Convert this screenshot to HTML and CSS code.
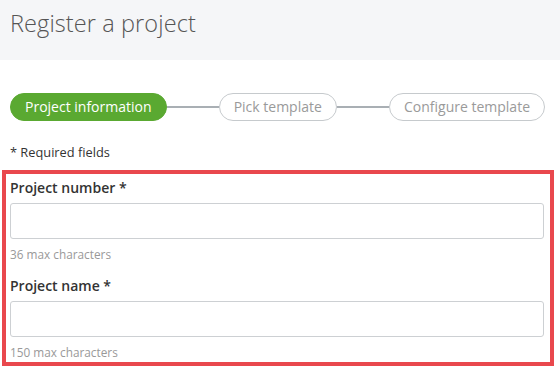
FILE: index.html
```html
<!DOCTYPE html>
<html>
<head>
<meta charset="utf-8">
<link rel="stylesheet" href="styles.css">
</head>
<body>
<header class="header">
  <h1 class="title">Register a project</h1>
</header>
<main class="content">
  <div class="stepper">
    <div class="step step-active">Project information</div>
    <div class="step-line"></div>
    <div class="step">Pick template</div>
    <div class="step-line"></div>
    <div class="step">Configure template</div>
  </div>
  <p class="required">* Required fields</p>
  <section class="form-box">
    <div class="field">
      <label class="label">Project number *</label>
      <input class="input" type="text">
      <div class="hint">36 max characters</div>
    </div>
    <div class="field field-second">
      <label class="label">Project name *</label>
      <input class="input" type="text">
      <div class="hint">150 max characters</div>
    </div>
  </section>
</main>
</body>
</html>
```
FILE: styles.css
```css
* { box-sizing: border-box; }
html, body { margin: 0; padding: 0; background: #fff; }
body {
  font-family: "Open Sans", "Liberation Sans", sans-serif;
  color: #333;
  width: 560px;
  height: 372px;
  overflow: hidden;
}
.header {
  height: 60px;
  background: #f5f6f8;
  padding: 7px 0 0 10px;
}
.title {
  margin: 0;
  font-size: 23.5px;
  font-weight: 300;
  line-height: 32px;
  color: #555;
  letter-spacing: 0.1px;
}
.content {
  padding: 33px 0 0 0;
}
.stepper {
  display: flex;
  align-items: center;
  margin: 0 15px 0 10px;
  height: 28px;
}
.step {
  height: 28px;
  border: 1px solid #c6cacd;
  border-radius: 14px;
  padding: 0 14px;
  font-size: 14px;
  line-height: 26px;
  color: #9a9a9a;
  white-space: nowrap;
  background: #fff;
}
.step-active {
  background: #5aa931;
  border-color: #5aa931;
  color: #fff;
}
.step-line {
  flex: 1;
  height: 2px;
  background: #a9afb4;
}
.required {
  margin: 23px 0 0 10px;
  font-size: 12.8px;
  line-height: 16px;
  color: #333;
}
.form-box {
  margin: 10px 0 0 2px;
  width: 552px;
  height: 196px;
  border: 4px solid #e9484d;
  padding: 4px 6px 0 4px;
}
.field {
  display: flex;
  flex-direction: column;
}
.field-second {
  margin-top: 14px;
}
.label {
  font-size: 14px;
  font-weight: 600;
  line-height: 20px;
  color: #333;
  margin-bottom: 5px;
}
.input {
  height: 36px;
  width: 100%;
  border: 1px solid #cdd0d3;
  border-radius: 3px;
  background: #fff;
  margin: 0;
  font-family: inherit;
}
.hint {
  margin-top: 7px;
  font-size: 11.8px;
  line-height: 16px;
  color: #999;
}
```
